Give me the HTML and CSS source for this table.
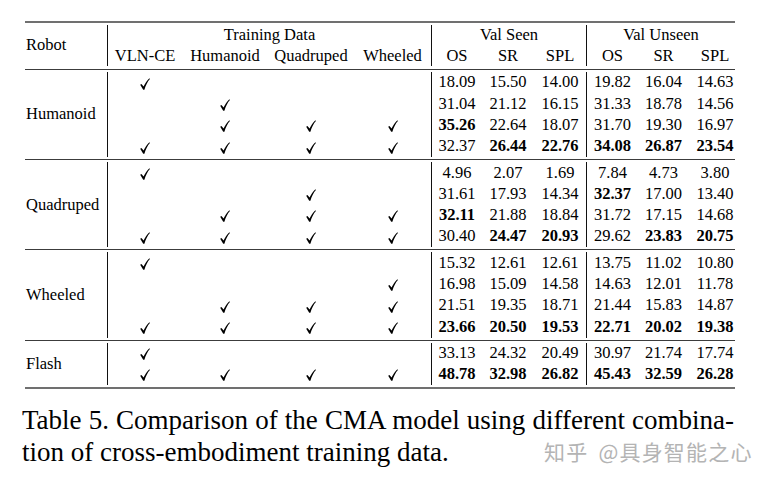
FILE: index.html
```html
<!DOCTYPE html>
<html lang="en">
<head>
<meta charset="utf-8">
<title>Table 5</title>
<link rel="stylesheet" href="styles.css">
</head>
<body>
<svg class="defs" width="0" height="0" aria-hidden="true">
  <symbol id="ck" viewBox="0 0 10 12">
    <path d="M0.2 6.7 L1.4 5.9 L3.6 8.6 C5.1 5.2 7.1 2.3 9.4 0.2 L9.9 0.9 C7.6 3.4 5.7 7.2 4.4 11.8 L3.2 11.8 Z"/>
  </symbol>
</svg>
<div class="page">
<table class="tbl">
  <colgroup>
    <col class="c-robot"><col class="c-vln"><col class="c-hum"><col class="c-quad"><col class="c-wh">
    <col class="c-n1"><col class="c-n2"><col class="c-n3"><col class="c-n4"><col class="c-n5"><col class="c-n6">
  </colgroup>
  <tbody>
    <tr class="rule thick"><td colspan="11"></td></tr>
    <tr class="gap"><td colspan="11"></td></tr>
    <tr class="h1"><th rowspan="2" class="robot">Robot</th><th colspan="4" class="vl">Training Data</th><th colspan="3" class="vl">Val Seen</th><th colspan="3" class="vl">Val Unseen</th></tr>
    <tr class="h2"><th class="vl">VLN-CE</th><th>Humanoid</th><th>Quadruped</th><th>Wheeled</th><th class="vl">OS</th><th>SR</th><th>SPL</th><th class="vl">OS</th><th>SR</th><th class="last">SPL</th></tr>
    <tr class="gap g3"><td colspan="11"></td></tr>
    <tr class="rule thin"><td colspan="11"></td></tr>
  </tbody>
  <tbody>
    <tr class="gap"><td colspan="11"></td></tr>
    <tr class="r"><td rowspan="4" class="robot">Humanoid</td><td class="vl"><svg class="ck"><use href="#ck"/></svg></td><td></td><td></td><td></td><td class="vl">18.09</td><td>15.50</td><td>14.00</td><td class="vl">19.82</td><td>16.04</td><td class="last">14.63</td></tr>
    <tr class="r"><td class="vl"></td><td><svg class="ck"><use href="#ck"/></svg></td><td></td><td></td><td class="vl">31.04</td><td>21.12</td><td>16.15</td><td class="vl">31.33</td><td>18.78</td><td class="last">14.56</td></tr>
    <tr class="r"><td class="vl"></td><td><svg class="ck"><use href="#ck"/></svg></td><td><svg class="ck"><use href="#ck"/></svg></td><td><svg class="ck"><use href="#ck"/></svg></td><td class="vl"><b>35.26</b></td><td>22.64</td><td>18.07</td><td class="vl">31.70</td><td>19.30</td><td class="last">16.97</td></tr>
    <tr class="r"><td class="vl"><svg class="ck"><use href="#ck"/></svg></td><td><svg class="ck"><use href="#ck"/></svg></td><td><svg class="ck"><use href="#ck"/></svg></td><td><svg class="ck"><use href="#ck"/></svg></td><td class="vl">32.37</td><td><b>26.44</b></td><td><b>22.76</b></td><td class="vl"><b>34.08</b></td><td><b>26.87</b></td><td class="last"><b>23.54</b></td></tr>
    <tr class="gap"><td colspan="11"></td></tr>
    <tr class="rule thin"><td colspan="11"></td></tr>
  </tbody>
  <tbody>
    <tr class="gap"><td colspan="11"></td></tr>
    <tr class="r"><td rowspan="4" class="robot">Quadruped</td><td class="vl"><svg class="ck"><use href="#ck"/></svg></td><td></td><td></td><td></td><td class="vl">4.96</td><td>2.07</td><td>1.69</td><td class="vl">7.84</td><td>4.73</td><td class="last">3.80</td></tr>
    <tr class="r"><td class="vl"></td><td></td><td><svg class="ck"><use href="#ck"/></svg></td><td></td><td class="vl">31.61</td><td>17.93</td><td>14.34</td><td class="vl"><b>32.37</b></td><td>17.00</td><td class="last">13.40</td></tr>
    <tr class="r"><td class="vl"></td><td><svg class="ck"><use href="#ck"/></svg></td><td><svg class="ck"><use href="#ck"/></svg></td><td><svg class="ck"><use href="#ck"/></svg></td><td class="vl"><b>32.11</b></td><td>21.88</td><td>18.84</td><td class="vl">31.72</td><td>17.15</td><td class="last">14.68</td></tr>
    <tr class="r"><td class="vl"><svg class="ck"><use href="#ck"/></svg></td><td><svg class="ck"><use href="#ck"/></svg></td><td><svg class="ck"><use href="#ck"/></svg></td><td><svg class="ck"><use href="#ck"/></svg></td><td class="vl">30.40</td><td><b>24.47</b></td><td><b>20.93</b></td><td class="vl">29.62</td><td><b>23.83</b></td><td class="last"><b>20.75</b></td></tr>
    <tr class="gap"><td colspan="11"></td></tr>
    <tr class="rule thin"><td colspan="11"></td></tr>
  </tbody>
  <tbody>
    <tr class="gap"><td colspan="11"></td></tr>
    <tr class="r"><td rowspan="4" class="robot">Wheeled</td><td class="vl"><svg class="ck"><use href="#ck"/></svg></td><td></td><td></td><td></td><td class="vl">15.32</td><td>12.61</td><td>12.61</td><td class="vl">13.75</td><td>11.02</td><td class="last">10.80</td></tr>
    <tr class="r"><td class="vl"></td><td></td><td></td><td><svg class="ck"><use href="#ck"/></svg></td><td class="vl">16.98</td><td>15.09</td><td>14.58</td><td class="vl">14.63</td><td>12.01</td><td class="last">11.78</td></tr>
    <tr class="r"><td class="vl"></td><td><svg class="ck"><use href="#ck"/></svg></td><td><svg class="ck"><use href="#ck"/></svg></td><td><svg class="ck"><use href="#ck"/></svg></td><td class="vl">21.51</td><td>19.35</td><td>18.71</td><td class="vl">21.44</td><td>15.83</td><td class="last">14.87</td></tr>
    <tr class="r"><td class="vl"><svg class="ck"><use href="#ck"/></svg></td><td><svg class="ck"><use href="#ck"/></svg></td><td><svg class="ck"><use href="#ck"/></svg></td><td><svg class="ck"><use href="#ck"/></svg></td><td class="vl"><b>23.66</b></td><td><b>20.50</b></td><td><b>19.53</b></td><td class="vl"><b>22.71</b></td><td><b>20.02</b></td><td class="last"><b>19.38</b></td></tr>
    <tr class="gap"><td colspan="11"></td></tr>
    <tr class="rule thin"><td colspan="11"></td></tr>
  </tbody>
  <tbody>
    <tr class="gap"><td colspan="11"></td></tr>
    <tr class="r"><td rowspan="2" class="robot">Flash</td><td class="vl"><svg class="ck"><use href="#ck"/></svg></td><td></td><td></td><td></td><td class="vl">33.13</td><td>24.32</td><td>20.49</td><td class="vl">30.97</td><td>21.74</td><td class="last">17.74</td></tr>
    <tr class="r"><td class="vl"><svg class="ck"><use href="#ck"/></svg></td><td><svg class="ck"><use href="#ck"/></svg></td><td><svg class="ck"><use href="#ck"/></svg></td><td><svg class="ck"><use href="#ck"/></svg></td><td class="vl"><b>48.78</b></td><td><b>32.98</b></td><td><b>26.82</b></td><td class="vl"><b>45.43</b></td><td><b>32.59</b></td><td class="last"><b>26.28</b></td></tr>
    <tr class="gap"><td colspan="11"></td></tr>
    <tr class="rule thick"><td colspan="11"></td></tr>
  </tbody>
</table>
<p class="caption"><span class="line1">Table 5. Comparison of the CMA model using different combina-</span><span class="line2">tion of cross-embodiment training data.</span></p>
<div class="watermark"><span class="wm-site">知乎</span><span class="wm-author">@具身智能之心</span></div>
</div>
</body>
</html>
```
FILE: styles.css
```css
html, body {
  margin: 0;
  padding: 0;
  background: #ffffff;
}

.defs {
  position: absolute;
  width: 0;
  height: 0;
  overflow: hidden;
}

.page {
  position: relative;
  width: 770px;
  height: 477px;
  padding: 21px 0 0 22px;
  box-sizing: border-box;
  font-family: "Liberation Serif", "Times New Roman", serif;
  color: #000;
}

.tbl {
  margin-left: 3px;
  width: 710px;
  table-layout: fixed;
  border-collapse: separate;
  border-spacing: 0;
  font-size: 16.5px;
  line-height: 1;
}

.c-robot { width: 82px; }
.c-vln { width: 75px; }
.c-hum { width: 86px; }
.c-quad { width: 86px; }
.c-wh { width: 77px; }
.c-n1 { width: 51px; }
.c-n2 { width: 52px; }
.c-n3 { width: 52px; }
.c-n4 { width: 52px; }
.c-n5 { width: 51px; }
.c-n6 { width: 46px; }

.tbl th,
.tbl td {
  padding: 0;
  text-align: center;
  vertical-align: middle;
  font-weight: normal;
  white-space: nowrap;
}

.tbl b {
  font-weight: bold;
}

.tbl .robot {
  text-align: left;
  padding-left: 1px;
}

.tbl .vl {
  border-left: 1px solid #111;
}

.tbl .last {
  padding-left: 6px;
}

.rule td {
  height: 0;
  padding: 0;
  font-size: 0;
  line-height: 0;
}

.rule.thick td {
  border-top: 2px solid #707070;
}

.rule.thin td {
  border-top: 1px solid #3c3c3c;
}

.gap td {
  height: 2px;
  font-size: 0;
  line-height: 0;
}

.gap.g3 td {
  height: 3px;
}

.h1 th,
.h2 th {
  height: 20.5px;
}

.r td {
  height: 21.3px;
}

.ck {
  display: inline-block;
  width: 10px;
  height: 12px;
  vertical-align: middle;
  fill: #000;
}

.caption {
  margin: 15px 0 0 0;
  width: 712px;
  font-size: 27px;
  line-height: 32px;
  color: #000;
}

.caption .line1 {
  display: block;
  text-align: justify;
  text-align-last: justify;
}

.caption .line2 {
  display: inline-block;
}

.watermark {
  position: absolute;
  left: 544px;
  top: 443px;
  font-family: "Noto Sans CJK SC", sans-serif;
  font-size: 21px;
  line-height: 16px;
  letter-spacing: 1.2px;
  color: #b4b4b4;
  white-space: nowrap;
  display: flex;
  gap: 10px;
}
```
